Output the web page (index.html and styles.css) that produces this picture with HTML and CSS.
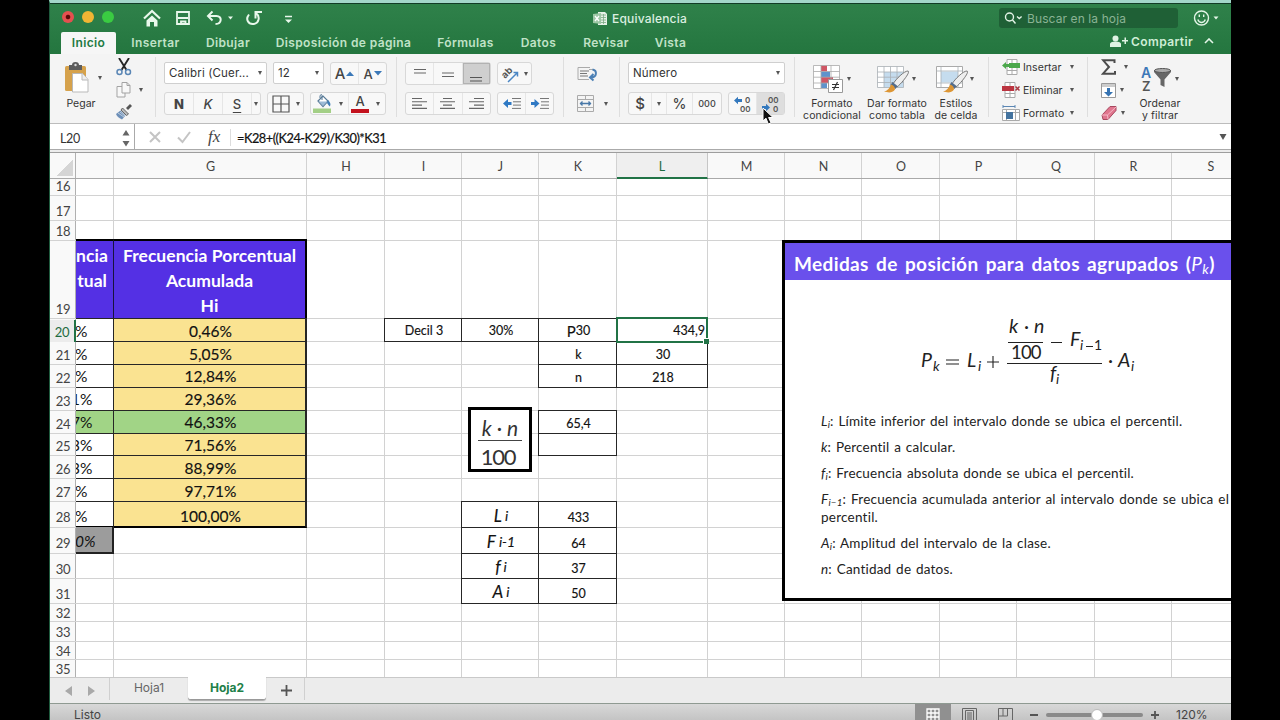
FILE: index.html
```html
<!DOCTYPE html>
<html lang="es">
<head>
<meta charset="utf-8">
<title>Equivalencia</title>
<link rel="stylesheet" href="styles.css">
</head>
<body>
<div class="window">
  <header class="titlebar">
    <div class="title-row">
      <div class="lights"><i class="red"></i><i class="yellow"></i><i class="green"></i></div>
      <svg class="quick" width="160" height="24" viewBox="0 0 160 24" fill="none" stroke="#e9f8ec" stroke-width="2">
        <path d="M1 12.500 9 5l8 7.500" stroke-width="2.200"/><path d="M3.500 14.500 9 9.500l5.500 5v6H11v-4.500H7v4.500H3.500z" fill="#e9f8ec" stroke="none"/>
        <path d="M34 6h12v12H34z" stroke-width="1.800"/><path d="M35 12h10M38 18v-2.500h4.500V18" stroke-width="1.800"/>
        <path d="m69.500 5.500-4.500 4.500 4.500 4.500M65 10h8.500c6 0 5.500 8-1 8"/><path d="M85 10.500h5l-2.500 3z" fill="#e9f8ec" stroke="none"/>
        <path d="M106 8.500c-4 5-.5 10 4.500 9.500 5.500-.5 7-7.500 2.500-11M119 6h-6.500v6.500"/>
        <path d="M142 10.500h7" stroke-width="1.500"/><path d="M142 13.500h7l-3.500 3.500z" fill="#e9f8ec" stroke="none"/>
      </svg>
      <div class="doc">
        <svg width="15" height="15" viewBox="0 0 15 15"><path d="M5 1h7l2 2v11H5z" fill="#e6f2e7"/><path d="M8 4h5M8 6.500h5M8 9h5M8 11.500h5M10.500 3v10" stroke="#7bab85" stroke-width=".8"/><path d="M0 3 8 2v11l-8-1z" fill="#9dc7a5"/><path d="m2 5 4 5M6 5l-4 5" stroke="#fff" stroke-width="1.300"/></svg>
        <span>Equivalencia</span>
      </div>
      <div class="search">
        <svg width="22" height="14" viewBox="0 0 22 14" fill="none" stroke="#e3f3e6" stroke-width="1.400"><circle cx="6.500" cy="6" r="4"/><path d="m9.500 9 3 3.500M14 5.500l2.300 2 2.300-2"/></svg>
        <span>Buscar en la hoja</span>
      </div>
      <svg class="smile" width="26" height="18" viewBox="0 0 26 18" fill="none" stroke="#e3f5e7" stroke-width="1.400"><circle cx="8.500" cy="9" r="7"/><path d="M4.800 10.500c1.500 4 6 4 7.500 0M6.300 5.500v2.500M10.700 5.500v2.500"/><path d="M20.500 7.500h5l-2.500 3z" fill="#e3f5e7" stroke="none"/></svg>
    </div>
    <div class="tab-row">
      <nav class="tabs"><b class="active">Inicio</b><i></i><b>Insertar</b><b>Dibujar</b><b>Disposición de página</b><b>Fórmulas</b><b>Datos</b><b>Revisar</b><b>Vista</b></nav>
      <div class="share">
        <svg width="18" height="13" viewBox="0 0 18 13" fill="#dff3e3"><circle cx="5.500" cy="3.500" r="3"/><path d="M0 12V9q0-2.500 5.500-2.500T11 9v3zM12 5h2.500V2.500H16V5h2v1.500h-2V9h-1.500V6.500H12z"/></svg>
        <span>Compartir</span>
        <svg class="up" width="10" height="6" viewBox="0 0 10 6"><path d="m1 5 4-4 4 4" fill="none" stroke="#e3f5e7" stroke-width="1.600"/></svg>
      </div>
    </div>
  </header>

  <div class="ribbon">
    <section class="group clipboard">
      <div class="paste">
        <div class="big-icon">
          <svg width="26" height="32" viewBox="0 0 26 32"><rect x="1" y="4" width="21" height="25" rx="1.500" fill="#d6a24c"/><path d="M5 3h3q0-3 3.500-3T15 3h3v5H5z" fill="#5d5d5d"/><circle cx="11.500" cy="3" r="1.200" fill="#ddd"/><path d="M8.500 11.500h10l5.500 6V30H8.500z" fill="#fff" stroke="#b9b9b9"/><path d="M18 11.500V18h6" fill="#eee" stroke="#b9b9b9"/></svg>
          <i class="caret"></i>
        </div>
        <span>Pegar</span>
      </div>
      <div class="clip-tools">
        <svg width="16" height="18" viewBox="0 0 16 18" fill="none"><path d="M3 0 10.500 12M13 0 5.500 12" stroke="#252525" stroke-width="1.900"/><circle cx="3.500" cy="14" r="2.500" stroke="#5a86b5" stroke-width="1.500"/><circle cx="12" cy="14" r="2.500" stroke="#5a86b5" stroke-width="1.500"/></svg>
        <div class="with-caret"><svg width="16" height="16" viewBox="0 0 16 16" fill="#f8f8f8" stroke="#a3a3a3"><path d="M1 4.500h5l3 3v7.500H1z"/><path d="M6 .5h5l3 3V11H6z"/><path d="M11 .5v3h3" fill="none"/></svg><i class="caret"></i></div>
        <svg width="16" height="16" viewBox="0 0 16 16"><path d="m10 4 4-4 2 2-4 4z" fill="#555"/><path d="m6.500 4 6 6-2 1.500-5.500-5.500z" fill="#bbb" stroke="#666"/><path d="m4.500 6.500 5 5L6 15.500Q1 13 0 10z" fill="#6d8fb8"/><path d="m2 9 6 4M4 8l5 4" stroke="#e3e8ee" stroke-width=".7"/></svg>
      </div>
    </section>

    <section class="group rows font">
      <div class="line">
        <div class="field w103"><span>Calibri (Cuer...</span><i class="caret"></i></div>
        <div class="field w51"><span>12</span><i class="caret"></i></div>
        <div class="btns w57"><b class="glyph lg">A<svg width="8" height="5"><path d="m0 5 4-4.500L8 5z" fill="#3a78b8"/></svg></b><b class="glyph">A<svg width="8" height="5"><path d="m0 0 4 4.500L8 0z" fill="#3a78b8"/></svg></b></div>
      </div>
      <div class="line">
        <div class="btns w97 nks"><b class="glyph bold">N</b><b class="glyph ital">K</b><b class="glyph under">S</b><b><i class="caret"></i></b></div>
        <div class="btns w37 split"><b><svg width="18" height="18" viewBox="0 0 18 18" fill="none" stroke="#555" stroke-width="1.200"><path d="M1 1h16v16H1zM9 1v16M1 9h16"/></svg></b><b><i class="caret"></i></b></div>
        <div class="btns w76 colors"><b><svg width="19" height="19" viewBox="0 0 19 19"><path d="m5 7 5-5 5 5-5 5.500z" fill="#fff" stroke="#567996" stroke-width="1.200"/><path d="m5.500 7.500 9 0-4.500 4.500z" fill="#9cbad6"/><path d="M9 6V1.500q0-2-2 0V4" fill="none" stroke="#567996"/><path d="M15 6q4 4 1.500 6.500L14 9z" fill="#3f7db5"/><path d="M0 14.500h18V19H0z" fill="#a3cf86"/></svg></b><b><i class="caret"></i></b><b class="fontcolor"><span>A</span></b><b><i class="caret"></i></b></div>
      </div>
    </section>

    <section class="group rows align">
      <div class="line">
        <div class="btns w86"><b><svg width="14" height="16" viewBox="0 0 14 16" stroke="#666" stroke-width="1.200"><path d="M1 3.500h12M1 7h12"/></svg></b><b><svg width="14" height="16" viewBox="0 0 14 16" stroke="#666" stroke-width="1.200"><path d="M1 7h12M1 10.500h12"/></svg></b><b class="pressed"><svg width="14" height="16" viewBox="0 0 14 16" stroke="#555" stroke-width="1.200"><path d="M1 11.500h12M1 15h12"/></svg></b></div>
        <div class="btns w35 angle"><b><svg width="20" height="20" viewBox="0 0 20 20"><text class="ab" x="5" y="15" transform="rotate(-45 5 15)">ab</text><path d="m8 18 9-9M17.500 12.500V8.500h-4" stroke="#4a86c4" stroke-width="1.500" fill="none"/></svg></b><b><i class="caret"></i></b></div>
      </div>
      <div class="line">
        <div class="btns w86"><b><svg width="15" height="13" viewBox="0 0 15 13" stroke="#666" stroke-width="1.100"><path d="M0 1.500h10M0 4.800h15M0 8.100h10M0 11.400h15"/></svg></b><b><svg width="15" height="13" viewBox="0 0 15 13" stroke="#666" stroke-width="1.100"><path d="M3 1.500h9M0 4.800h15M3 8.100h9M0 11.400h15"/></svg></b><b><svg width="15" height="13" viewBox="0 0 15 13" stroke="#666" stroke-width="1.100"><path d="M5 1.500h10M0 4.800h15M5 8.100h10M0 11.400h15"/></svg></b></div>
        <div class="btns w57"><b><svg width="18" height="13" viewBox="0 0 18 13"><path d="M9 1.500h9M10 4.800h8M10 8.100h8M9 11.400h9" stroke="#777"/><path d="m0 6.500 5-4.500v3h3.500v3H5v3z" fill="#2f79c4"/></svg></b><b><svg width="18" height="13" viewBox="0 0 18 13"><path d="M9 1.500h9M10 4.800h8M10 8.100h8M9 11.400h9" stroke="#777"/><path d="M8.500 6.500 3.500 2v3H0v3h3.500v3z" fill="#2f79c4"/></svg></b></div>
      </div>
    </section>

    <section class="group rows wrap">
      <div class="line"><svg width="21" height="16" viewBox="0 0 21 16" fill="none"><path d="M12 13.500H1V1.500h12M12 3.500h5" stroke="#aaa"/><path d="M3 5h9M3 7.500h7M3 10h8" stroke="#777"/><path d="M15.500 3.500c5 1 4.500 8-1.500 8M16.500 8 13 11.500l3.500 3" stroke="#4c80b5" stroke-width="2"/></svg></div>
      <div class="line"><svg width="17" height="17" viewBox="0 0 17 17" fill="none"><path d="M.5.500h16v16H.5zM.5 4.500h16M.5 12.500h16M8.500.500v4M8.500 12.500v4" stroke="#aaa"/><path d="M3 8.500h11M5.500 6.500 3.500 8.500l2 2M11.500 6.500l2 2-2 2" stroke="#4878a8" stroke-width="1.300"/></svg><i class="caret"></i></div>
    </section>

    <section class="group rows number">
      <div class="line"><div class="field w157"><span>Número</span><i class="caret edge"></i></div></div>
      <div class="line">
        <div class="btns w94 money"><b class="glyph dollar">$</b><b><i class="caret"></i></b><b class="glyph pct">%</b><b class="glyph zeros">000</b></div>
        <div class="btns w57 dec">
          <b><svg width="18" height="16" viewBox="0 0 18 16"><path d="m0 4.500 4-3.800V3h4v3H4v2.300z" fill="#3378bd"/><text x="11" y="7">0</text><text x="6" y="15.500">00</text></svg></b>
          <b class="hover"><svg width="18" height="16" viewBox="0 0 18 16"><path d="M8 11.500 4 7.700V10H0v3h4v2.300z" fill="#3378bd"/><text x="6" y="7">00</text><text x="11" y="15.500">0</text></svg></b>
        </div>
      </div>
      <svg class="pointer" width="14" height="18" viewBox="0 0 14 18"><path d="M1 1v13l3-2.800L6.300 17l2.700-1.200-2.400-5.300H11z" fill="#111" stroke="#fff"/></svg>
    </section>

    <section class="group styles">
      <div class="tool t1"><div class="big-icon"><svg width="30" height="29" viewBox="0 0 30 29"><path d="M.5.500h26v23H.5z" fill="#fff"/><path d="M8 .5h6v6H8zM8 12h12v6H8z" fill="#d05664"/><path d="M8 6.500h9V12H8zM8 18h6v5H8z" fill="#5f93cb"/><path d="M.5.500h26v23H.5zM.5 6.500h26M.5 12.200h26M.5 18h26M8 .5v23M18 .5v23" fill="none" stroke="#a9a9a9" stroke-width=".8"/><path d="M15.500 14.500h14v13h-14z" fill="#fff" stroke="#999"/><path d="M19 19.500h7M19 22.500h7M24.500 17l-4 8" stroke="#333" stroke-width="1.200"/></svg><i class="caret"></i></div><span>Formato<br>condicional</span></div>
      <div class="tool t2"><div class="big-icon"><svg width="33" height="29" viewBox="0 0 33 29"><path d="M.5 1.500h26v21H.5z" fill="#fff"/><path d="M7 7h19.500v15.500H7z" fill="#c5dcee"/><path d="M.5 1.500h26v21H.5zM.5 7h26M.5 12.200h26M.5 17.500h26M7 1.500v21M13.500 1.500v21M20 1.500v21" fill="none" stroke="#a9b0b5" stroke-width=".8"/><path d="M31 6c3 1-7 13-11 16l-4-3C19 14 27 6 31 6z" fill="#eee" stroke="#777"/><path d="m15.500 17 5 4-2 3-5-4z" fill="#536d8c"/><path d="M14 19.500q4 1 4 5c-3 4-7 3-11 2q5-1 7-7z" fill="#dd9635"/></svg><i class="caret"></i></div><span>Dar formato<br>como tabla</span></div>
      <div class="tool t3"><div class="big-icon"><svg width="33" height="29" viewBox="0 0 33 29"><path d="M.5 1.500h26v21H.5z" fill="#fff" stroke="#aaa"/><path d="M5 6.500h17v11H5z" fill="#c5dcee"/><path d="M.5 6h26M.5 18h26M5 1.500v21M22 1.500v21" fill="none" stroke="#a9b0b5" stroke-width=".8"/><path d="M31 6c3 1-7 13-11 16l-4-3C19 14 27 6 31 6z" fill="#eee" stroke="#777"/><path d="m15.500 17 5 4-2 3-5-4z" fill="#536d8c"/><path d="M14 19.500q4 1 4 5c-3 4-7 3-11 2q5-1 7-7z" fill="#dd9635"/></svg><i class="caret"></i></div><span>Estilos<br>de celda</span></div>
    </section>

    <section class="group cells">
      <div class="item"><svg width="18" height="16" viewBox="0 0 18 16"><path d="M5 .5h10v15H5zM10 .5v15M5 11.500h10" fill="#fff" stroke="#aaa"/><path d="M7 4h11v5H7zM0 6.500 4 3v2h3v3H4v2z" fill="#4ca84c"/></svg><span>Insertar</span><i class="caret"></i></div>
      <div class="item"><svg width="18" height="16" viewBox="0 0 18 16"><path d="M3 .5h10v15H3zM8 .5v15M3 11.500h10" fill="#fff" stroke="#aaa"/><path d="M0 4h12v5H0z" fill="#bb3440"/><path d="m13.500 4.500 4 4M17.500 4.500l-4 4" stroke="#a63640" stroke-width="1.500"/></svg><span>Eliminar</span><i class="caret"></i></div>
      <div class="item"><svg width="18" height="16" viewBox="0 0 18 16"><path d="M1 1.500h12M1 0v3M13 0v3" stroke="#5c87b4"/><path d="M.5 4.500h17v11H.5zM.5 7.500h17M4.500 4.500v11M13.500 4.500v11" fill="#fff" stroke="#aaa"/><path d="M4 7h7v7H4z" fill="#44739f"/></svg><span>Formato</span><i class="caret"></i></div>
    </section>

    <section class="group edit">
      <div class="edit-tools">
        <div><svg width="16" height="16" viewBox="0 0 16 16"><path d="M13.500 4V1.300H2.200L8 8l-6 6.700h12V12" fill="none" stroke="#4c4c4c" stroke-width="2"/></svg><i class="caret far"></i></div>
        <div><svg width="15" height="15" viewBox="0 0 15 15"><path d="M.5.500h14v14H.5z" fill="#fff" stroke="#999"/><path d="M1 1h13v3H1z" fill="#ccc"/><path d="M6 5h3v4h3l-4.500 4.500L3 9h3z" fill="#3573b2"/></svg><i class="caret"></i></div>
        <div><svg width="16" height="16" viewBox="0 0 16 16"><path d="m1 10 8-8.500 6 0v4L7 14.500H2z" fill="#e0758e" stroke="#a7485f"/><path d="m1 10 5.500 0L15 2M6.500 10 7 14.500" stroke="#f4bac7" fill="none"/></svg><i class="caret"></i></div>
      </div>
      <div class="tool t4"><div class="big-icon"><svg width="31" height="28" viewBox="0 0 31 28"><text class="sa" x="0" y="13">A</text><text class="sz" x="1" y="26">Z</text><path d="M13 5h17v2l-6.500 7.500V22l-4-2v-5.500L13 7z" fill="#666"/><ellipse cx="21.500" cy="5.500" rx="8" ry="2" fill="#aaa" stroke="#555"/></svg><i class="caret"></i></div><span>Ordenar<br>y filtrar</span></div>
    </section>
  </div>

  <div class="formula-bar">
    <div class="namebox"><span>L20</span><svg width="8" height="18" viewBox="0 0 8 18" fill="#666"><path d="m4 1 3.500 5.500h-7zM4 17.500.5 12h7z"/></svg></div>
    <svg class="fx-tools" width="60" height="16" viewBox="0 0 60 16" fill="none" stroke="#c4c4c4" stroke-width="2"><path d="m4 3 10 10M14 3 4 13M32 8.500l4.500 4.500L44 3"/></svg>
    <i class="fx">fx</i>
    <span class="formula">=K28+((K24-K29)/K30)*K31</span>
    <svg class="expand" width="8" height="6"><path d="M.5 0h7L4 6z" fill="#555"/></svg>
  </div>

  <main class="sheet">
    <div class="head-bg"></div><div class="rows-bg"></div>
    <i class="v c1"></i><i class="v c2"></i><i class="v c3"></i><i class="v c4"></i><i class="v c5"></i><i class="v c6"></i><i class="v c7"></i><i class="v c8"></i><i class="v c9"></i><i class="v c10"></i><i class="v c11"></i><i class="v c12"></i><i class="v c13"></i><i class="v c14"></i>
    <i class="h r1"></i><i class="h r16"></i><i class="h r17"></i><i class="h r18"></i><i class="h r19"></i><i class="h r20"></i><i class="h r21"></i><i class="h r22"></i><i class="h r23"></i><i class="h r24"></i><i class="h r25"></i><i class="h r26"></i><i class="h r27"></i><i class="h r28"></i><i class="h r29"></i><i class="h r30"></i><i class="h r31"></i><i class="h r32"></i><i class="h r33"></i><i class="h r34"></i>

    <div class="corner c1 r1"></div>
    <b class="col c3">G</b><b class="col c4">H</b><b class="col c5">I</b><b class="col c6">J</b><b class="col c7">K</b><b class="col c8 sel">L</b><b class="col c9">M</b><b class="col c10">N</b><b class="col c11">O</b><b class="col c12">P</b><b class="col c13">Q</b><b class="col c14">R</b><b class="col c15 cut">S</b>
    <b class="row r16">16</b><b class="row r17">17</b><b class="row r18">18</b><b class="row r19">19</b><b class="row r20 sel">20</b><b class="row r21">21</b><b class="row r22">22</b><b class="row r23">23</b><b class="row r24">24</b><b class="row r25">25</b><b class="row r26">26</b><b class="row r27">27</b><b class="row r28">28</b><b class="row r29">29</b><b class="row r30">30</b><b class="row r31">31</b><b class="row r32">32</b><b class="row r33">33</b><b class="row r34">34</b><b class="row r35">35</b>

    <div class="th c2 r19 part">ncia<br>tual</div>
    <div class="th c3 r19">Frecuencia Porcentual<br>Acumulada<br>Hi</div>
    <div class="f c2 r20"><span>%</span></div><div class="g c3 r20">0,46%</div>
    <div class="f c2 r21"><span>%</span></div><div class="g c3 r21">5,05%</div>
    <div class="f c2 r22"><span>%</span></div><div class="g c3 r22">12,84%</div>
    <div class="f c2 r23 two"><span>1%</span></div><div class="g c3 r23">29,36%</div>
    <div class="f c2 r24 two hit"><span>7%</span></div><div class="g c3 r24 hit">46,33%</div>
    <div class="f c2 r25 two"><span>3%</span></div><div class="g c3 r25">71,56%</div>
    <div class="f c2 r26 two"><span>3%</span></div><div class="g c3 r26">88,99%</div>
    <div class="f c2 r27"><span>%</span></div><div class="g c3 r27">97,71%</div>
    <div class="f c2 r28 last"><span>%</span></div><div class="g c3 r28 last">100,00%</div>
    <div class="f c2 r29 total"><span>0%</span></div>

    <div class="n c5 r20">Decil 3</div><div class="n c6 r20">30%</div><div class="n c7 r20"><span class="pk">P</span>30</div>
    <div class="n c7 r21">k</div><div class="n c8 r21">30</div><div class="n c7 r22">n</div><div class="n c8 r22">218</div>
    <div class="n c8 r20 current">434,9</div>
    <div class="n c7 r24">65,4</div><div class="n c7 r25"></div>
    <div class="n c6 r28 var"><em>L</em><i>i</i></div><div class="n c7 r28">433</div>
    <div class="n c6 r29 var"><em>F</em><i>i-1</i></div><div class="n c7 r29">64</div>
    <div class="n c6 r30 var"><em>f</em><i>i</i></div><div class="n c7 r30">37</div>
    <div class="n c6 r31 var"><em>A</em><i>i</i></div><div class="n c7 r31">50</div>

    <div class="frac-pic"><span class="num">k · n</span><span class="den">100</span></div>

    <article class="slide">
      <h1>Medidas de posición para datos agrupados (<i>P<sub>k</sub></i>)</h1>
      <svg class="equation" width="445" height="100" viewBox="0 0 445 100">
        <g class="it"><text x="136" y="65">P</text><text class="s" x="148" y="69">k</text><text x="182" y="65">L</text><text class="s" x="193" y="69">i</text><text x="224" y="31">k</text><text x="249" y="31">n</text><text x="285" y="44">F</text><text class="s" x="295" y="48">i</text><text x="265" y="78">f</text><text class="s" x="271" y="82">i</text><text x="333" y="65">A</text><text class="s" x="346" y="69">i</text></g>
        <text class="hundred" x="226" y="57">100</text><text class="s" x="309" y="48">1</text><text x="239" y="31">·</text><text x="323" y="65">·</text>
        <path d="M161 58h13M161 62h13M202 60h12M208 54v12M223 40.500h35M266 40.500h11M301 44.500h7M222 61.500h95" stroke="#222" stroke-width="1.100"/>
      </svg>
      <div class="defs">
        <p><i>L<sub>i</sub></i>: Límite inferior del intervalo donde se ubica el percentil.</p>
        <p><i>k</i>: Percentil a calcular.</p>
        <p><i>f<sub>i</sub></i>: Frecuencia absoluta donde se ubica el percentil.</p>
        <p class="long"><i>F<sub>i−1</sub></i>: Frecuencia acumulada anterior al intervalo donde se ubica el<br>percentil.</p>
        <p><i>A<sub>i</sub></i>: Amplitud del intervalo de la clase.</p>
        <p><i>n</i>: Cantidad de datos.</p>
      </div>
    </article>
  </main>

  <footer class="sheet-tabs">
    <div class="arrows"><svg width="32" height="12" fill="#a9a9a9"><path d="M7 1v10L0 6zM23 1v10l7-5z"/></svg></div>
    <span class="tab">Hoja1</span><span class="tab on">Hoja2</span>
    <span class="add"><svg width="11" height="11"><path d="M5.500 0v11M0 5.500h11" stroke="#555" stroke-width="1.800"/></svg></span>
  </footer>
  <div class="status">
    <span class="ready">Listo</span>
    <div class="view on"><svg width="14" height="14" viewBox="0 0 14 14" fill="none" stroke="#fff" stroke-width="1.300"><path d="M1 1h12v12H1zM1 5h12M1 9h12M5 1v12M9 1v12"/></svg></div>
    <div class="view"><svg width="15" height="14" viewBox="0 0 15 14" fill="none" stroke="#666"><path d="M.5.500h14v13H.5zM3.500 2.500h8v10h-8zM5 5h5M5 7h5M5 9h5M5 11h5"/></svg></div>
    <div class="view"><svg width="15" height="14" viewBox="0 0 15 14" fill="none" stroke="#666"><path d="M.5 14V.5h14V14M.5 8h9V.5M5 .5V8"/></svg></div>
    <div class="zoom"><svg width="130" height="16" viewBox="0 0 130 16"><path d="M1 8h8M122 8h8M126 4v8" stroke="#555" stroke-width="1.800"/><rect x="17" y="6" width="97" height="4" rx="2" fill="#8a8a8a"/><circle cx="68" cy="8" r="5.500" fill="#fff" stroke="#bbb"/></svg></div>
    <span class="pc">120%</span>
  </div>
</div>
</body>
</html>
```
FILE: styles.css
```css
* { box-sizing: border-box; }
body { margin: 0; background: #000; width: 1280px; height: 720px; overflow: hidden; font-family: Inter, "Liberation Sans", sans-serif; }
svg { display: block; flex: none; }
.window { width: 1182px; height: 720px; margin-left: 49px; border-left: 1px solid #1f5a3d; border-top: 3px solid #a3d7ca; display: flex; flex-direction: column; background: #fff; overflow: hidden; }

/* title bar and ribbon tabs */
.titlebar { height: 51px; flex: none; border-top: 1px solid #123c26; background: linear-gradient(#2f814a, #24763f); }
.title-row { display: flex; height: 28px; align-items: center; }
.lights { display: flex; gap: 8px; margin-left: 12px; width: 72px; margin-right: 9px; margin-top: -2px; }
.lights i { width: 12px; height: 12px; border-radius: 50%; }
.red { background: radial-gradient(circle, #5a0808 22%, #e4504f 32%); }
.yellow { background: #f1b534; }
.green { background: #3acb42; }
.doc { display: flex; align-items: center; gap: 4px; margin-left: 290px; width: 100px; font-size: 12px; color: #dcefe0; letter-spacing: .2px; font-weight: 500; white-space: nowrap; }
.search { display: flex; align-items: center; width: 179px; height: 20px; margin-left: 306px; padding-left: 4px; background: #1f6036; border-radius: 3px; color: #8ab394; font-size: 12px; letter-spacing: .1px; }
.search span { margin-left: 2px; }
.smile { margin-left: 15px; }
.tab-row { display: flex; height: 22px; }
.tabs { display: grid; grid-template-columns: 55px 2px 75px 70px 161px 83px 63px 72px 57px; margin-left: 11px; width: 1049px; height: 22px; }
.tabs b { font-size: 12px; font-weight: 600; color: #c0e2c7; text-align: center; line-height: 21px; white-space: nowrap; letter-spacing: .38px; }
.tabs .active { background: #f6f6f6; color: #1f7a43; border-radius: 2px 2px 0 0; }
.share { display: flex; align-items: center; height: 18px; color: #cfeed6; font-size: 12px; font-weight: 600; gap: 3px; letter-spacing: .4px; }
.share .up { margin-left: 8px; }

/* ribbon */
.ribbon { display: flex; height: 70px; flex: none; background: #f4f4f4; border-bottom: 1px solid #bcbcbc; }
.group { height: 60px; margin-top: 3px; border-right: 1px solid #dedede; flex: none; }
.caret { display: block; flex: none; width: 0; height: 0; border: 2.5px solid transparent; border-top: 4px solid #555; border-bottom: 0; }
.clipboard { width: 106px; display: flex; }
.paste { width: 62px; padding-left: 14px; font-size: 10.5px; color: #333; }
.paste .big-icon { margin-top: 3px; height: 36px; gap: 8px; }
.paste span { display: block; width: 34px; text-align: center; margin-top: 1px; }
.big-icon { display: flex; align-items: center; }
.clip-tools { display: flex; flex-direction: column; gap: 6px; padding: 1px 0 0 4px; }
.with-caret { display: flex; align-items: center; gap: 7px; }
.rows { display: flex; flex-direction: column; gap: 7px; padding-top: 5px; }
.rows .line { display: flex; gap: 6px; height: 23px; margin-left: 8px; }
.font { width: 241px; } .align { width: 167px; } .wrap { width: 56px; } .number { width: 175px; position: relative; }
.field { display: flex; align-items: center; justify-content: space-between; height: 22px; padding: 0 4px 0 4px; background: #fff; border: 1px solid #cfcfcf; border-radius: 2px; font-size: 11.5px; color: #333; white-space: nowrap; letter-spacing: .15px; }
.btns { display: flex; height: 23px; background: #f8f8f8; border: 1px solid #d8d8d8; border-radius: 3px; }
.btns b { display: flex; flex: 1; align-items: center; justify-content: center; border-right: 1px solid #e6e6e6; font-weight: 500; color: #444; }
.btns b:last-child { border-right: 0; }
.w103 { width: 103px; } .w51 { width: 51px; } .w57 { width: 57px; } .w97 { width: 97px; } .w37 { width: 37px; } .w76 { width: 76px; } .w86 { width: 86px; } .w35 { width: 35px; } .w157 { width: 157px; } .w94 { width: 94px; }
.glyph { font-size: 13px; } .lg { font-size: 15px; } .glyph svg { margin-left: 1px; }
.nks b:nth-child(-n+3) { flex: none; width: 29px; }
.bold { font-weight: 800 !important; } .ital { font-style: italic; } .under { text-decoration: underline; text-underline-offset: 3px; font-weight: 400; }
.split b:first-child { flex: none; width: 25px; border: 0; }
.colors b { border: 0; } .colors b:nth-child(odd) { flex: none; width: 24px; margin-left: 0; }
.colors b:nth-child(1) { margin-left: -1px; } .colors b:nth-child(3) { border-left: 1px solid #e6e6e6; }
.fontcolor span { width: 18px; height: 19px; line-height: 15px; border-bottom: 4px solid #c3121d; text-align: center; font-size: 13px; }
.pressed { background: #cfcfcf; box-shadow: inset 0 0 0 1px #b2b2b2; }
.hover { background: #dedede; }
.ab { font: bold 9.5px Inter, sans-serif; fill: #555; }
.angle b:first-child { flex: none; width: 23px; border: 0; }
.wrap .line { margin-left: 13px; align-items: center; gap: 10px; }
.money b { flex: none; width: 23px; } .money .caret { margin: 0; } .money b:nth-child(2) { width: 15px; } .money b:nth-child(3) { width: 26px; } .money b:nth-child(4) { width: 28px; }
.dollar { font-size: 15px; } .pct { font-size: 14px; } .zeros { font-size: 9px; }
.dec text { font: 600 8px Inter, sans-serif; fill: #555; }
.pointer { position: absolute; left: 142px; top: 50px; }
.edge { border-width: 4px 2.5px 0; }
.styles { width: 194px; display: flex; }
.tool { display: flex; flex-direction: column; font-size: 10.5px; line-height: 11.5px; letter-spacing: .08px; color: #333; text-align: center; white-space: nowrap; padding-top: 6px; }
.tool .big-icon { height: 32px; flex: none; gap: 4px; margin-bottom: 2px; }
.tool > span { padding-top: 1px; margin-bottom: -8px; }
.t1 { width: 60px; margin-left: 7px; } .t1 .big-icon { padding-left: 11px; }
.t2 { width: 66px; margin-left: 2px; } .t2 .big-icon { padding-left: 13px; gap: 2px; }
.t3 { width: 50px; margin-left: 1px; } .t3 .big-icon { padding-left: 5px; gap: 1px; }
.t4 { width: 50px; margin-left: 5px; } .t4 .big-icon { padding-left: 6px; gap: 3px; }
.cells { width: 99px; display: flex; flex-direction: column; padding: 1px 0 0 13px; gap: 5px; }
.item { display: flex; flex: none; align-items: center; height: 18px; gap: 3px; font-size: 10.5px; color: #333; }
.item span { width: 44px; letter-spacing: .05px; white-space: nowrap; }
.edit { display: flex; border: 0; }
.edit-tools { display: flex; flex-direction: column; gap: 5px; padding: 1px 0 0 13px; width: 42px; }
.edit-tools div { display: flex; flex: none; align-items: center; height: 18px; gap: 4px; } .far { margin-left: 3px; }
.sa { font: 600 14px Inter, sans-serif; fill: #3c78b8; } .sz { font: 600 13px Inter, sans-serif; fill: #555; }

/* formula bar */
.formula-bar { display: flex; align-items: center; height: 29px; flex: none; background: #fff; border-bottom: 1px solid #9e9e9e; box-shadow: inset 0 -2px #ededed, inset 0 -3px #aaa; font-family: Lato, sans-serif; padding-bottom: 2px; }
.namebox { display: flex; justify-content: space-between; align-items: center; width: 85px; height: 26px; padding: 2px 4px 0 10px; border-right: 1px solid #aaa; font-size: 12.5px; color: #333; letter-spacing: -.3px; }
.fx-tools { margin-left: 11px; }
.fx { font: italic 17px "Liberation Serif", serif; color: #444; margin-left: 2px; width: 22px; }
.formula { flex: 1; font-size: 12.8px; letter-spacing: -.5px; color: #111; border-left: 1px solid #ddd; padding-left: 6px; padding-top: 1px; -webkit-text-stroke: .2px #111; }
.expand { margin-right: 4px; }

/* sheet: the tracks give the column widths and row heights */
.sheet { position: relative; display: grid; height: 524px; flex: none; overflow: hidden; font-family: Lato, Carlito, sans-serif; color: #111;
  grid-template-columns: 26px 38px 193px 78px 77px 77px 78px 91px 77px 77px 78px 77px 78px 77px 59px;
  grid-template-rows: 26px 17px 25px 20px 78px 23px 23px 23px 23px 23px 22px 23px 23px 26px 26px 25px 25px 18px 20px 18px 17px; }
.head-bg { grid-area: 1 / 1 / 2 / -1; background: #f9f9f9; }
.rows-bg { grid-area: 2 / 1 / -1 / 2; background: #f9f9f9; }
.v { grid-row: 1 / -1 !important; border-right: 1px solid #d2d2d2; }
.v.c1 { border-color: #b0b0b0; }
.h { grid-column: 1 / -1; border-bottom: 1px solid #d2d2d2; }
.h.r1 { border-color: #a9a9a9; }
.c1 { grid-column: 1; } .c2 { grid-column: 2; } .c3 { grid-column: 3; } .c4 { grid-column: 4; } .c5 { grid-column: 5; } .c6 { grid-column: 6; } .c7 { grid-column: 7; } .c8 { grid-column: 8; } .c9 { grid-column: 9; } .c10 { grid-column: 10; } .c11 { grid-column: 11; } .c12 { grid-column: 12; } .c13 { grid-column: 13; } .c14 { grid-column: 14; } .c15 { grid-column: 15; }
.r1 { grid-row: 1; } .r16 { grid-row: 2; } .r17 { grid-row: 3; } .r18 { grid-row: 4; } .r19 { grid-row: 5; } .r20 { grid-row: 6; } .r21 { grid-row: 7; } .r22 { grid-row: 8; } .r23 { grid-row: 9; } .r24 { grid-row: 10; } .r25 { grid-row: 11; } .r26 { grid-row: 12; } .r27 { grid-row: 13; } .r28 { grid-row: 14; } .r29 { grid-row: 15; } .r30 { grid-row: 16; } .r31 { grid-row: 17; } .r32 { grid-row: 18; } .r33 { grid-row: 19; } .r34 { grid-row: 20; } .r35 { grid-row: 21; }
.corner { margin: 7px 3px 3px 6px; background: linear-gradient(to bottom right, transparent 50%, #d5d5d5 50%); }
.col { grid-row: 1; font-weight: 400; font-size: 12.5px; color: #444; text-align: center; line-height: 27px; }
.col.sel { background: #efefef; border-bottom: 2px solid #217346; border-right: 1px solid #c6c6c6; color: #1d6b40; }
.col.cut { padding-left: 19px; }
.row { grid-column: 1; align-self: end; font-weight: 400; font-size: 13px; color: #444; text-align: center; line-height: 18px; padding: 0 0 1px; letter-spacing: -.2px; }
.row.r28, .row.r29 { padding-bottom: 2px; }
.row.r32, .row.r34 { margin-bottom: -1px; }
.row.r35 { padding-bottom: 0; margin-bottom: -1px; }
.row.sel { color: #1d6b40; background: #ececec; border-right: 2px solid #217346; padding: 3px 0 0; height: 22px; }
.th { margin: -2px 0 0 -1px; padding-top: 2px; border: 1px solid #18133d; border-top: 2px solid #000; background: #5430e4; color: #fff; font-size: 17.5px; font-weight: 700; line-height: 25px; text-align: center; white-space: nowrap; letter-spacing: .05px; }
.th.c3 { border-right: 2px solid #000; }
.th.part { margin-left: 0; border-left: 0; text-align: right; padding-right: 6px; overflow: hidden; }
.f, .g, .n { display: flex; align-items: flex-end; justify-content: center; margin: -1px 0 0 -1px; padding-bottom: 0; border: 1px solid #262626; white-space: nowrap; }
.f, .g { font-size: 15.5px; line-height: 19px; }
.g { background: #fae391; border-right: 2px solid #262626; padding-left: 2px; -webkit-text-stroke: .15px #111; }
.r22.g, .r23.g, .r24.g, .r22.f, .r23.f, .r24.f { padding-bottom: 1px; }
.f { margin-left: 0; border-left: 0; justify-content: flex-start; overflow: hidden; background: #fff; }
.f span { margin-left: -1px; } .f.two span { margin-left: -5px; }
.hit { background: #a1d486; }
.last { border-bottom: 2px solid #000; }
.total { background: #9c9c9c; font-style: italic; border: 2px solid #222; border-left: 0; border-top: 0; padding-bottom: 1px; }
.n { font-size: 12.5px; line-height: 18px; padding-left: 2px; -webkit-text-stroke: .15px #111; }
.n.r20 { padding-bottom: 1px; }
.pk { font-size: 15px; }
.current { justify-content: flex-end; border: 2px solid #217346; margin: -2px 0 -1px -1px; padding-right: 1px; position: relative; }
.current::after { content: ""; position: absolute; right: -3px; bottom: -3px; width: 5px; height: 5px; background: #217346; border: solid #fff; border-width: 1px 0 0 1px; box-sizing: content-box; }
.n.var { padding-bottom: 2px; gap: 3px; } .var em { font-size: 17px; } .var i { font-size: 14px; }
.frac-pic { position: absolute; left: 418px; top: 254px; width: 64px; height: 65px; border: 3px solid #000; background: #fff; display: flex; flex-direction: column; align-items: center; font-size: 21px; color: #333; }
.frac-pic .num { font-style: italic; width: 44px; height: 34px; padding-top: 5px; line-height: 25px; border-bottom: 1px solid #444; text-align: center; white-space: nowrap; }
.frac-pic .den { font-size: 22px; line-height: 29px; letter-spacing: -1.3px; margin-left: -4px; margin-top: 1px; }

.slide { position: absolute; left: 732px; top: 87px; width: 470px; height: 361px; border: 3px solid #000; background: #fff; }
.slide h1 { margin: 0; height: 37px; padding-left: 9px; background: #6a50ec; color: #fff; font-size: 19px; line-height: 41px; white-space: nowrap; letter-spacing: .38px; word-spacing: 2.2px; overflow: hidden; }
.slide h1 i { font-weight: 400; }
sub { font-size: .72em; line-height: 0; vertical-align: -.2em; }
.equation text { font: 19.5px Lato, sans-serif; fill: #222; } .equation .it text { font-style: italic; } .equation text.s { font-size: 14px; } .equation text.hundred { font-size: 18.5px; letter-spacing: -.8px; }
.equation { margin-top: 22px; }
.defs { padding: 10px 0 0 36px; font-size: 13.5px; line-height: 18px; color: #222; white-space: nowrap; letter-spacing: .2px; word-spacing: 1.1px; }
.defs p { margin: 0 0 8px; }
.defs .long { letter-spacing: .23px; }

/* sheet tabs and status bar */
.sheet-tabs { display: flex; height: 26px; flex: none; background: #ececec; border-top: 1px solid #c9c9c9; font-size: 12px; color: #666; }
.arrows { width: 60px; padding: 7px 0 0 15px; border-right: 1px solid #d0d0d0; height: 22px; }
.tab { width: 78px; text-align: center; line-height: 20px; height: 22px; }
.tab.on { background: #fff; color: #218048; font-weight: 700; margin-top: -1px; border-bottom: 1px solid #999; border-radius: 0 0 3px 3px; height: 23px; line-height: 22px; box-shadow: 0 1px 1px #aaa; }
.add { width: 39px; height: 22px; border-right: 1px solid #d0d0d0; padding: 7px 0 0 15px; }
.status { display: flex; height: 17px; flex: none; border-top: 1px solid #8f9a92; background: linear-gradient(#d8d8d8, #c4c4c4); font-size: 12px; color: #444; overflow: hidden; }
.ready { margin-left: 24px; width: 841px; line-height: 22px; }
.view { width: 36px; height: 17px; display: flex; justify-content: center; padding-top: 4px; }
.view.on { background: #909090; }
.zoom { width: 130px; margin: 3px 0 0 6px; }
.pc { margin-left: 17px; line-height: 22px; }
```
